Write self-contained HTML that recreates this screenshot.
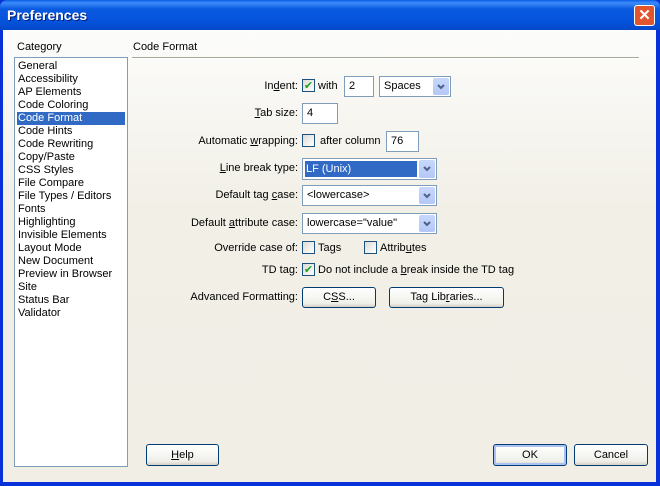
<!DOCTYPE html>
<html><head><style>
*{margin:0;padding:0;box-sizing:border-box}
body{width:660px;height:486px;overflow:hidden;font:11px "Liberation Sans",sans-serif;color:#000;position:relative;background:#0831d9}
.a{position:absolute;white-space:nowrap}
#title{left:0;top:0;width:660px;height:30px;background:linear-gradient(#0a5fe6 0%,#3d8bf8 10%,#0a5ae0 30%,#0553dc 70%,#0348c8 100%);border-radius:7px 7px 0 0}
#ttext{left:7px;top:7px;color:#fff;font:bold 14px "Liberation Sans",sans-serif;text-shadow:1px 1px #0a1e7a}
#close{left:634px;top:5px;width:21px;height:21px;background:#e0542e;border:1px solid #fff;border-radius:3px;color:#fff;text-align:center;font:bold 15px/19px "Liberation Sans",sans-serif}
#body{left:3px;top:30px;width:653px;height:452px;background:linear-gradient(#fcfcfb,#f1efe6 40%,#f0eee5)}
.list{left:14px;top:57px;width:114px;height:410px;background:#fff;border:1px solid #7f9db9}
.it{position:absolute;left:2px;width:108px;height:13px;line-height:13px;padding-left:1px}
.sel{background:#316ac5;color:#fff}
.lbl{text-align:right;width:200px;left:98px}
.inp{background:#fff;border:1px solid #7f9db9;padding-left:4px;line-height:19px}
.cb{width:13px;height:13px;border:1px solid #1c5180;background:linear-gradient(135deg,#dcdbd5,#fff)}
.ck{color:#21a121;font:bold 11px/11px "DejaVu Sans",sans-serif;text-align:center}
.dd{position:absolute;right:1px;top:1px;width:16px;bottom:1px;background:linear-gradient(#c8d8fc,#b4c8f6);border-radius:2px}
.dd svg{position:absolute;left:4px;top:6px}
.btn{border:1px solid #003c74;border-radius:3px;background:linear-gradient(#fff,#f0f0ea 80%,#d6d0c5);text-align:center;line-height:21px}
u{text-decoration:underline}
</style></head><body>
<div class="a" id="title"></div>
<div class="a" id="ttext">Preferences</div>
<div class="a" id="close">✕</div>
<div class="a" id="body"></div>
<div class="a" style="left:17px;top:41px">Category</div>
<div class="a" style="left:133px;top:41px">Code Format</div>
<div class="a" style="left:132px;top:57px;width:507px;height:2px;border-top:1px solid #aca899;border-bottom:1px solid #fff"></div>
<div class="a list">
<div class="it" style="top:2px">General</div>
<div class="it" style="top:15px">Accessibility</div>
<div class="it" style="top:28px">AP Elements</div>
<div class="it" style="top:41px">Code Coloring</div>
<div class="it sel" style="top:54px">Code Format</div>
<div class="it" style="top:67px">Code Hints</div>
<div class="it" style="top:80px">Code Rewriting</div>
<div class="it" style="top:93px">Copy/Paste</div>
<div class="it" style="top:106px">CSS Styles</div>
<div class="it" style="top:119px">File Compare</div>
<div class="it" style="top:132px">File Types / Editors</div>
<div class="it" style="top:145px">Fonts</div>
<div class="it" style="top:158px">Highlighting</div>
<div class="it" style="top:171px">Invisible Elements</div>
<div class="it" style="top:184px">Layout Mode</div>
<div class="it" style="top:197px">New Document</div>
<div class="it" style="top:210px">Preview in Browser</div>
<div class="it" style="top:223px">Site</div>
<div class="it" style="top:236px">Status Bar</div>
<div class="it" style="top:249px">Validator</div>
</div>

<div class="a lbl" style="top:80px">In<u>d</u>ent:</div>
<div class="a cb ck" style="left:302px;top:79px">✔</div>
<div class="a" style="left:318px;top:80px">with</div>
<div class="a inp" style="left:344px;top:76px;width:30px;height:21px">2</div>
<div class="a inp" style="left:379px;top:76px;width:72px;height:21px">Spaces<div class="dd"><svg width="8" height="6"><path d="M1 1L4 4L7 1" stroke="#4d6185" stroke-width="2" fill="none"/></svg></div></div>

<div class="a lbl" style="top:107px"><u>T</u>ab size:</div>
<div class="a inp" style="left:302px;top:103px;width:36px;height:21px">4</div>

<div class="a lbl" style="top:135px">Automatic <u>w</u>rapping:</div>
<div class="a cb" style="left:302px;top:134px"></div>
<div class="a" style="left:320px;top:135px">after column</div>
<div class="a inp" style="left:386px;top:131px;width:33px;height:21px">76</div>

<div class="a lbl" style="top:162px"><u>L</u>ine break type:</div>
<div class="a inp" style="left:302px;top:158px;width:135px;height:22px;padding:2px"><div style="background:#316ac5;color:#fff;height:16px;line-height:16px;width:112px;padding-left:1px">LF (Unix)</div><div class="dd"><svg width="8" height="6"><path d="M1 1L4 4L7 1" stroke="#4d6185" stroke-width="2" fill="none"/></svg></div></div>

<div class="a lbl" style="top:189px">Default tag <u>c</u>ase:</div>
<div class="a inp" style="left:302px;top:185px;width:135px;height:21px">&lt;lowercase&gt;<div class="dd"><svg width="8" height="6"><path d="M1 1L4 4L7 1" stroke="#4d6185" stroke-width="2" fill="none"/></svg></div></div>

<div class="a lbl" style="top:217px">Default <u>a</u>ttribute case:</div>
<div class="a inp" style="left:302px;top:213px;width:135px;height:21px">lowercase="value"<div class="dd"><svg width="8" height="6"><path d="M1 1L4 4L7 1" stroke="#4d6185" stroke-width="2" fill="none"/></svg></div></div>

<div class="a lbl" style="top:242px">Override case of:</div>
<div class="a cb" style="left:302px;top:241px"></div>
<div class="a" style="left:318px;top:242px">Ta<u>g</u>s</div>
<div class="a cb" style="left:364px;top:241px"></div>
<div class="a" style="left:380px;top:242px">Attrib<u>u</u>tes</div>

<div class="a lbl" style="top:264px">TD tag:</div>
<div class="a cb ck" style="left:302px;top:263px">✔</div>
<div class="a" style="left:318px;top:264px">Do not include a <u>b</u>reak inside the TD tag</div>

<div class="a lbl" style="top:291px">Advanced Formatting:</div>
<div class="a btn" style="left:302px;top:287px;width:74px;height:21px;line-height:19px">C<u>S</u>S...</div>
<div class="a btn" style="left:389px;top:287px;width:115px;height:21px;line-height:19px">Tag Lib<u>r</u>aries...</div>

<div class="a btn" style="left:146px;top:444px;width:73px;height:22px"><u>H</u>elp</div>
<div class="a btn" style="left:493px;top:444px;width:74px;height:22px;box-shadow:inset 0 0 0 2px #a9c2f2">OK</div>
<div class="a btn" style="left:574px;top:444px;width:74px;height:22px">Cancel</div>
</body></html>
